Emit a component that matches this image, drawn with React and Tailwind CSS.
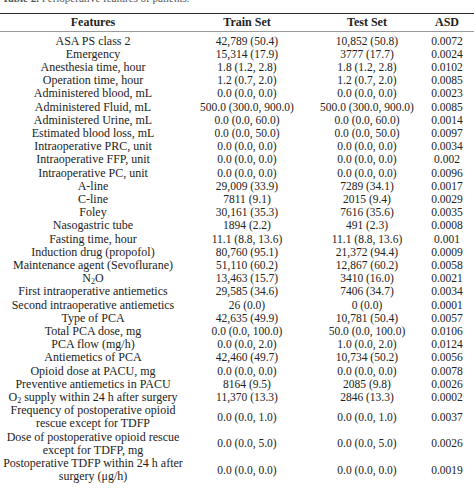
import React from 'react';

const rows = [
  ['ASA PS class 2', '42,789 (50.4)', '10,852 (50.8)', '0.0072'],
  ['Emergency', '15,314 (17.9)', '3777 (17.7)', '0.0024'],
  ['Anesthesia time, hour', '1.8 (1.2, 2.8)', '1.8 (1.2, 2.8)', '0.0102'],
  ['Operation time, hour', '1.2 (0.7, 2.0)', '1.2 (0.7, 2.0)', '0.0085'],
  ['Administered blood, mL', '0.0 (0.0, 0.0)', '0.0 (0.0, 0.0)', '0.0023'],
  ['Administered Fluid, mL', '500.0 (300.0, 900.0)', '500.0 (300.0, 900.0)', '0.0085'],
  ['Administered Urine, mL', '0.0 (0.0, 60.0)', '0.0 (0.0, 60.0)', '0.0014'],
  ['Estimated blood loss, mL', '0.0 (0.0, 50.0)', '0.0 (0.0, 50.0)', '0.0097'],
  ['Intraoperative PRC, unit', '0.0 (0.0, 0.0)', '0.0 (0.0, 0.0)', '0.0034'],
  ['Intraoperative FFP, unit', '0.0 (0.0, 0.0)', '0.0 (0.0, 0.0)', '0.002'],
  ['Intraoperative PC, unit', '0.0 (0.0, 0.0)', '0.0 (0.0, 0.0)', '0.0096'],
  ['A-line', '29,009 (33.9)', '7289 (34.1)', '0.0017'],
  ['C-line', '7811 (9.1)', '2015 (9.4)', '0.0029'],
  ['Foley', '30,161 (35.3)', '7616 (35.6)', '0.0035'],
  ['Nasogastric tube', '1894 (2.2)', '491 (2.3)', '0.0008'],
  ['Fasting time, hour', '11.1 (8.8, 13.6)', '11.1 (8.8, 13.6)', '0.001'],
  ['Induction drug (propofol)', '80,760 (95.1)', '21,372 (94.4)', '0.0009'],
  ['Maintenance agent (Sevoflurane)', '51,110 (60.2)', '12,867 (60.2)', '0.0058'],
  [<>N<sub className="text-[8px]">2</sub>O</>, '13,463 (15.7)', '3410 (16.0)', '0.0021'],
  ['First intraoperative antiemetics', '29,585 (34.6)', '7406 (34.7)', '0.0034'],
  ['Second intraoperative antiemetics', '26 (0.0)', '0 (0.0)', '0.0001'],
  ['Type of PCA', '42,635 (49.9)', '10,781 (50.4)', '0.0057'],
  ['Total PCA dose, mg', '0.0 (0.0, 100.0)', '50.0 (0.0, 100.0)', '0.0106'],
  ['PCA flow (mg/h)', '0.0 (0.0, 2.0)', '1.0 (0.0, 2.0)', '0.0124'],
  ['Antiemetics of PCA', '42,460 (49.7)', '10,734 (50.2)', '0.0056'],
  ['Opioid dose at PACU, mg', '0.0 (0.0, 0.0)', '0.0 (0.0, 0.0)', '0.0078'],
  ['Preventive antiemetics in PACU', '8164 (9.5)', '2085 (9.8)', '0.0026'],
  [<>O<sub className="text-[8px]">2</sub> supply within 24 h after surgery</>, '11,370 (13.3)', '2846 (13.3)', '0.0002'],
  [<>Frequency of postoperative opioid<br />rescue except for TDFP</>, '0.0 (0.0, 1.0)', '0.0 (0.0, 1.0)', '0.0037'],
  [<>Dose of postoperative opioid rescue<br />except for TDFP, mg</>, '0.0 (0.0, 5.0)', '0.0 (0.0, 5.0)', '0.0026'],
  [<>Postoperative TDFP within 24 h after<br />surgery (μg/h)</>, '0.0 (0.0, 0.0)', '0.0 (0.0, 0.0)', '0.0019'],
];

export default function App() {
  return (
    <div className="w-[474px] h-[488px] overflow-hidden bg-white text-[#222] font-['Liberation_Serif',serif] text-[12px]">
      {/* caption, mostly scrolled off the top */}
      <p className="mt-[-8px] mb-[8px] h-[13px] leading-[13px] pl-[2px] text-[11px] text-[#555] whitespace-nowrap">
        <span className="font-bold">Table 2.</span> Perioperative features of patients.
      </p>

      <table className="table-fixed w-[474px] border-collapse">
        <colgroup>
          <col className="w-[186px]" />
          <col className="w-[122px]" />
          <col className="w-[118px]" />
          <col className="w-[48px]" />
        </colgroup>
        <thead>
          <tr className="border-t-[1.5px] border-t-[#2a2a2a] border-b border-b-[#9a9a9a]">
            <th className="h-[18px] p-0 text-center font-bold leading-[13px]">Features</th>
            <th className="h-[18px] p-0 text-center font-bold leading-[13px]">Train Set</th>
            <th className="h-[18px] p-0 text-center font-bold leading-[13px]">Test Set</th>
            <th className="h-[18px] p-0 pr-[6px] text-center font-bold leading-[13px]">ASD</th>
          </tr>
        </thead>
        <tbody>
          <tr>
            <td colSpan={4} className="h-[3px] p-0"></td>
          </tr>
          {rows.map((r, i) => (
            <tr key={i} className="leading-[13.2px]">
              <td className="p-0 text-center align-middle whitespace-nowrap">{r[0]}</td>
              <td className="p-0 text-center align-middle whitespace-nowrap text-[11.5px]">{r[1]}</td>
              <td className="p-0 text-center align-middle whitespace-nowrap text-[11.5px]">{r[2]}</td>
              <td className="p-0 pr-[6px] text-center align-middle text-[11.5px]">{r[3]}</td>
            </tr>
          ))}
        </tbody>
      </table>
    </div>
  );
}
